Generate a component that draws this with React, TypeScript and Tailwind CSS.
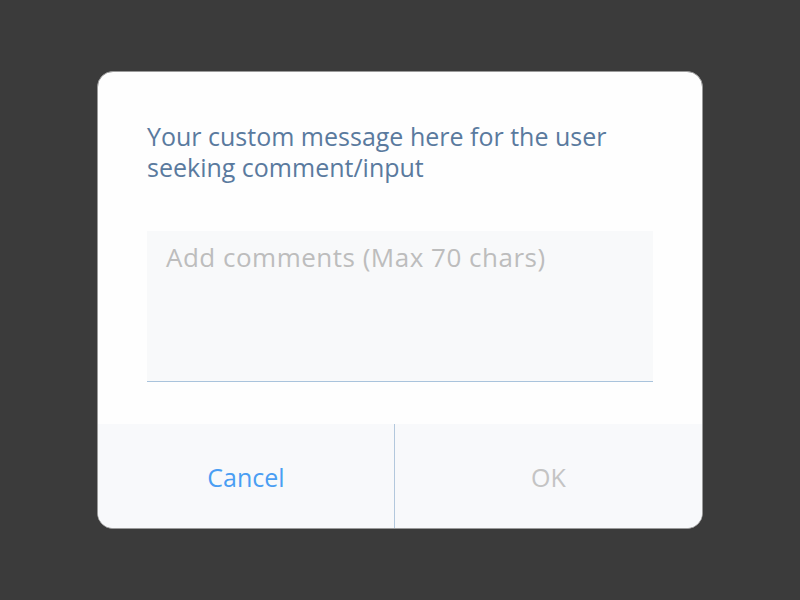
import React from "react";

export default function App() {
  return (
    <div
      className="w-[800px] h-[600px] bg-[#3b3b3b] flex items-center justify-center"
      style={{ fontFamily: '"Open Sans", "Noto Sans", sans-serif' }}
    >
      <div className="w-[606px] h-[458px] bg-[#fefefe] rounded-[16px] border border-[#9a9a9a] overflow-hidden flex flex-col">
        <div className="px-[49px] pt-[49px] text-[25px] leading-[31px] text-[#5a7a9e]">
          Your custom message here for the user seeking comment/input
        </div>
        <div className="mx-[49px] mt-[48px] h-[151px] bg-[#f8f9fa] border-b border-[#a9c3dc] px-[19px] pt-[11px] text-[26px] leading-[31px] tracking-[0.5px] text-[#bdbdbd]">
          Add comments (Max 70 chars)
        </div>
        <div className="mt-auto h-[104px] bg-[#f8f9fb] flex">
          <div className="w-[297px] flex items-center justify-center pt-[3px] text-[25px] text-[#4a9ef3] border-r border-[#b3c8dd]">
            Cancel
          </div>
          <div className="flex-1 flex items-center justify-center pt-[3px] text-[25px] text-[#c4c4c4]">
            OK
          </div>
        </div>
      </div>
    </div>
  );
}
